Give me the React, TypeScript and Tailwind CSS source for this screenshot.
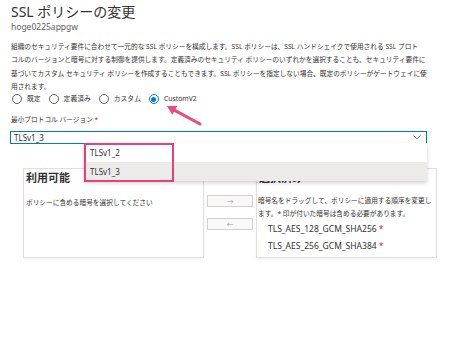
import React from 'react';

const radios = [
    { label: '既定', checked: false },
    { label: '定義済み', checked: false },
    { label: 'カスタム', checked: false },
    { label: 'CustomV2', checked: true },
];

const intro = [
    '組織のセキュリティ要件に合わせて一元的な SSL ポリシーを構成します。SSL ポリシーは、SSL ハンドシェイクで使用される SSL プロト',
    'コルのバージョンと暗号に対する制御を提供します。定義済みのセキュリティ ポリシーのいずれかを選択することも、セキュリティ要件に',
    '基づいてカスタム セキュリティ ポリシーを作成することもできます。SSL ポリシーを指定しない場合、既定のポリシーがゲートウェイに使',
    '用されます。',
];

const ciphers = ['TLS_AES_128_GCM_SHA256', 'TLS_AES_256_GCM_SHA384'];

const Radio = ({ label, checked }: { label: string; checked: boolean }) => (
    <div className="flex items-center gap-[5px]">
        <span
            className={`flex h-[10px] w-[10px] items-center justify-center rounded-full border ${
                checked ? 'border-[#0078d4]' : 'border-[#605e5c]'
            }`}
        >
            {checked && <span className="h-[5px] w-[5px] rounded-full bg-[#0078d4]" />}
        </span>
        <span className="text-[6.8px] leading-[10px]">{label}</span>
    </div>
);

const ArrowButton = ({ glyph }: { glyph: string }) => (
    <div className="flex h-[12px] w-[46px] items-center justify-center border border-[#d2d0ce] bg-[#faf9f8] text-[7px] leading-none text-[#a19f9d]">
        {glyph}
    </div>
);

export default function App() {
    return (
        <div className="relative h-[361px] w-[474px] overflow-hidden bg-white font-['Noto_Sans','Noto_Sans_CJK_JP',sans-serif] text-[#323130]">
            <div className="pl-[11px] pt-[2px]">
                <h1 className="h-[20px] text-[14px] leading-[20px] whitespace-nowrap">SSL ポリシーの変更</h1>
                <div className="text-[8.5px] leading-[10px] text-[#605e5c]">hoge0225appgw</div>

                <div className="mt-[8px] text-[6.7px] leading-[13.25px]">
                    {intro.map((line) => (
                        <div key={line} className="whitespace-nowrap">
                            {line}
                        </div>
                    ))}
                </div>

                <div className="flex h-[12px] items-center gap-[8px] pl-[1px]">
                    {radios.map((r) => (
                        <Radio key={r.label} {...r} />
                    ))}
                </div>

                <div className="mt-[10px] h-[10px] text-[6.7px] leading-[10px]">
                    最小プロトコル バージョン <span className="text-[#a4262c]">*</span>
                </div>

                <div className="-ml-[1px] mt-[6px] flex h-[13px] w-[417px] items-center justify-between border-[1.5px] border-[#0078d4] pl-[3px] pr-[5px]">
                    <span className="text-[8px] leading-none">TLSv1_3</span>
                    <svg width="8" height="5" viewBox="0 0 8 5" fill="none">
                        <path d="M0.5 0.5 L4 4 L7.5 0.5" stroke="#8a8886" strokeWidth="0.9" />
                    </svg>
                </div>

                <div className="ml-[12px] mt-[24px] flex">
                    <div className="h-[90px] w-[181px] border border-[#e1dfdd] pl-[2px] shadow-[0_1px_2px_rgba(0,0,0,0.06)]">
                        <div className="mt-[2px] text-[11px] font-bold leading-[14px]">利用可能</div>
                        <div className="mt-[13px] text-[6.7px] leading-[10px]">ポリシーに含める暗号を選択してください</div>
                    </div>

                    <div className="ml-[3px] flex flex-col gap-[11px] pt-[27px]">
                        <ArrowButton glyph="→" />
                        <ArrowButton glyph="←" />
                    </div>

                    <div className="ml-[3px] h-[90px] w-[181px] border border-[#e1dfdd] pl-[1px] shadow-[0_1px_2px_rgba(0,0,0,0.06)]">
                        <div className="mt-[2px] pl-[1px] text-[11px] font-bold leading-[14px]">選択済み</div>
                        <div className="mt-[8.5px] text-[6.7px] leading-[13px]">
                            <div className="whitespace-nowrap">暗号名をドラッグして、ポリシーに適用する順序を変更し</div>
                            <div className="whitespace-nowrap">ます。* 印が付いた暗号は含める必要があります。</div>
                        </div>
                        <div className="pl-[10px]">
                            {ciphers.map((c) => (
                                <div key={c} className="h-[17px] text-[8.5px] leading-[17px] whitespace-nowrap">
                                    {c} <span className="text-[#d13438]">*</span>
                                </div>
                            ))}
                        </div>
                    </div>
                </div>
            </div>

            {/* open dropdown list */}
            <div className="absolute left-[84px] top-[143px] w-[343px] bg-white shadow-[0_2px_4px_rgba(0,0,0,0.18)]">
                <div className="flex h-[19px] items-center pl-[6px] text-[8px]">TLSv1_2</div>
                <div className="flex h-[19px] items-center bg-[#edebe9] pl-[6px] text-[8px]">TLSv1_3</div>
            </div>

            {/* highlight box */}
            <div className="absolute left-[84px] top-[143px] h-[39px] w-[90px] border-2 border-[#e8407a]" />

            {/* pointer arrow */}
            <svg className="absolute left-[160px] top-[100px]" width="50" height="30" viewBox="0 0 50 30">
                <line x1="40" y1="24" x2="14.8" y2="10.4" stroke="#ec4a82" strokeWidth="3" strokeLinecap="round" />
                <polygon points="7,6 17.25,6.05 12.35,14.75" fill="#ec4a82" />
            </svg>
        </div>
    );
}
